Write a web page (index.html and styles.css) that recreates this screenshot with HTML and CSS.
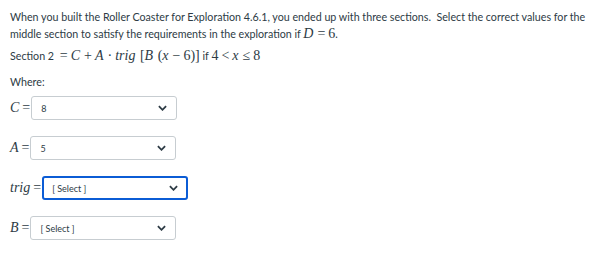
FILE: index.html
```html
<!DOCTYPE html>
<html>
<head>
<meta charset="utf-8">
<link rel="stylesheet" href="styles.css">
</head>
<body>
<div class="page">
  <p class="intro">When you built the Roller Coaster for Exploration 4.6.1, you ended up with three sections.&nbsp; Select the correct values for the middle section to satisfy the requirements in the exploration if <span class="m"><i>D</i><span class="op">=</span>6</span>.</p>
  <p class="eq">Section 2 <span class="m"><span class="op">=</span><i>C</i><span class="op">+</span><i>A</i><span class="op">·</span><i>trig</i> [<i>B</i> (<i>x</i><span class="op">−</span>6)]</span> if <span class="m">4<span class="op">&lt;</span><i>x</i><span class="op">≤</span>8</span></p>
  <p class="where">Where:</p>
  <div class="rows">
    <div class="row"><span class="m lbl"><i>C</i><span class="op">=</span></span><div class="sel"><span class="val">8</span><svg class="chev" viewBox="0 0 10 6" width="9" height="6"><polyline points="1,1 5,5 9,1" fill="none" stroke="#2d3b45" stroke-width="2"/></svg></div></div>
    <div class="row"><span class="m lbl"><i>A</i><span class="op">=</span></span><div class="sel"><span class="val">5</span><svg class="chev" viewBox="0 0 10 6" width="9" height="6"><polyline points="1,1 5,5 9,1" fill="none" stroke="#2d3b45" stroke-width="2"/></svg></div></div>
    <div class="row"><span class="m lbl"><i>trig</i><span class="op">=</span></span><div class="sel focus"><span class="val">[ Select ]</span><svg class="chev" viewBox="0 0 10 6" width="9" height="6"><polyline points="1,1 5,5 9,1" fill="none" stroke="#2d3b45" stroke-width="2"/></svg></div></div>
    <div class="row"><span class="m lbl"><i>B</i><span class="op">=</span></span><div class="sel"><span class="val">[ Select ]</span><svg class="chev" viewBox="0 0 10 6" width="9" height="6"><polyline points="1,1 5,5 9,1" fill="none" stroke="#2d3b45" stroke-width="2"/></svg></div></div>
  </div>
</div>
</body>
</html>
```
FILE: styles.css
```css
html, body {
  margin: 0;
  padding: 0;
  background: #fff;
}
.page {
  padding: 8px 10px;
  font-family: Lato, "Liberation Sans", sans-serif;
  font-size: 10.7px;
  color: #2d3b45;
}
p {
  margin: 0;
}
.intro {
  line-height: 17px;
}
.eq {
  margin-top: 4px;
  line-height: 20px;
}
.where {
  margin-top: 8px;
  line-height: 16px;
}
.m {
  font-family: "Liberation Serif", "DejaVu Serif", serif;
  font-size: 14px;
  line-height: 1;
}
.m i {
  font-style: italic;
  padding-right: 1px;
}
.op {
  padding: 0 3px;
}
.lbl .op {
  padding: 0 1px 0 2px;
}
.rows {
  margin-top: 6px;
  display: flex;
  flex-direction: column;
  gap: 16px;
}
.row {
  display: flex;
  align-items: center;
  height: 24px;
}
.lbl {
  white-space: nowrap;
}
.sel {
  box-sizing: border-box;
  width: 146px;
  height: 24px;
  border: 1px solid #c7cdd1;
  border-radius: 3px;
  display: flex;
  align-items: center;
  justify-content: space-between;
  padding: 0 9px 0 9px;
  font-family: Lato, "Liberation Sans", sans-serif;
  font-size: 9px;
  color: #2d3b45;
  background: #fff;
}
.sel.focus {
  border: 2px solid #0b5cd5;
  padding: 0 8px 0 8px;
}
.chev {
  display: block;
}
```
